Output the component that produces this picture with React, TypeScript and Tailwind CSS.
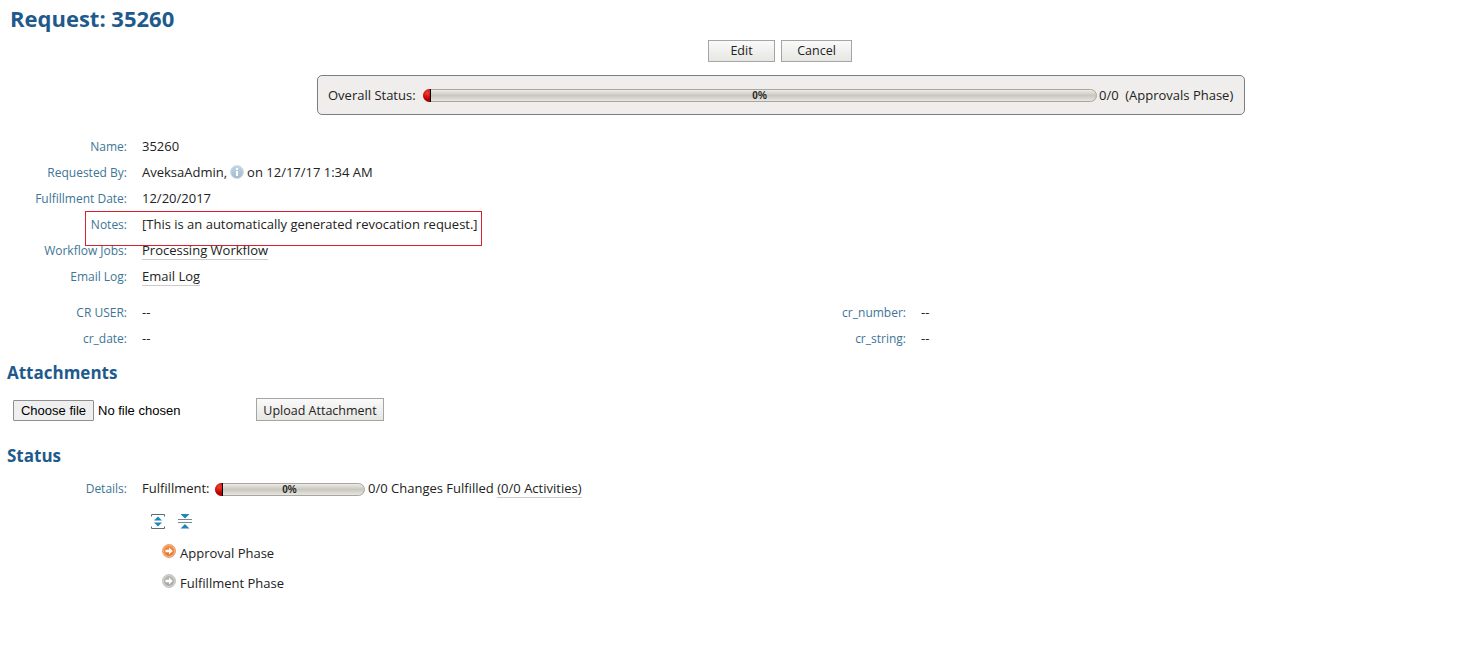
const font = "font-['Open_Sans',sans-serif]";

function Bar({ width }: { width: string }) {
  return (
    <span className={`relative inline-block h-[13px] ${width}`}>
      <span className="absolute inset-0 rounded-full border border-[#a8a69e] bg-[linear-gradient(#ecebe7,#c9c7be_50%,#e6e5e0)]" />
      <span className="absolute left-0 top-0 h-[13px] w-[8px] rounded-l-full border-r border-black bg-[radial-gradient(circle_at_60%_30%,#f04030,#c00000_60%,#900000)]" />
      <span className="absolute inset-0 flex items-center justify-center font-['Liberation_Sans',sans-serif] text-[10px] font-bold text-[#222]">
        0%
      </span>
    </span>
  );
}

function Row({ label, children }: { label: string; children: React.ReactNode }) {
  return (
    <div className="flex h-[26px] items-center">
      <div className="w-[127px] shrink-0 text-right text-[12px] text-[#3d7596]">{label}:</div>
      <div className="ml-[15px] flex items-center">{children}</div>
    </div>
  );
}

function Btn({ children, className }: { children: React.ReactNode; className: string }) {
  return (
    <button className={`border border-[#a5a5a5] bg-[linear-gradient(#fafafa,#e6e6e2)] text-[12.5px] text-[#222] ${className}`}>
      {children}
    </button>
  );
}

function PhaseIcon({ id, light, mid, dark }: { id: string; light: string; mid: string; dark: string }) {
  return (
    <svg width="14" height="14" viewBox="0 0 14 14">
      <defs>
        <linearGradient id={id} x1="0" y1="0" x2="0" y2="1">
          <stop offset="0" stopColor={mid} />
          <stop offset="1" stopColor={dark} />
        </linearGradient>
      </defs>
      <circle cx="7" cy="7" r="6.5" fill={light} stroke={dark} strokeWidth="0.6" />
      <circle cx="7" cy="7" r="5" fill={`url(#${id})`} />
      <path d="M3.5 5.8H7V3.5L10.8 7 7 10.5V8.2H3.5Z" fill="#fff" />
    </svg>
  );
}

export default function App() {
  return (
    <div className={`${font} h-[665px] bg-white text-[13px] text-[#222]`}>
      <h1 className="pl-[10px] pt-[5px] text-[22px] font-bold leading-[27px] text-[#1f5a8c]">Request: 35260</h1>

      <div className="ml-[708px] mt-[8px] flex gap-[6px]">
        <Btn className="h-[22px] w-[67px] pt-px">Edit</Btn>
        <Btn className="h-[22px] w-[71px] pt-px">Cancel</Btn>
      </div>

      <div className="ml-[317px] mt-[13px] flex h-[40px] w-[928px] items-center rounded-[5px] border border-[#7d7d7d] bg-[#efeeec] pl-[10px] pt-px">
        <span>Overall Status:</span>
        <span className="ml-[7px] flex"><Bar width="w-[674px]" /></span>
        <span className="ml-[2.5px]">0/0</span>
        <span className="ml-[6.5px]">(Approvals Phase)</span>
      </div>

      <div className="mt-[19px]">
        <Row label="Name">35260</Row>
        <Row label="Requested By">
          AveksaAdmin,
          <svg className="mx-[3px] -mt-[2px]" width="14" height="14" viewBox="0 0 14 14">
            <defs>
              <linearGradient id="info" x1="0" y1="0" x2="0" y2="1">
                <stop offset="0" stopColor="#c3d6e4" />
                <stop offset="1" stopColor="#9fb9cd" />
              </linearGradient>
            </defs>
            <circle cx="7" cy="7" r="6.5" fill="url(#info)" stroke="#d3dde5" />
            <rect x="6" y="6" width="2" height="5" fill="#fff" />
            <rect x="6" y="3" width="2" height="2" fill="#fff" />
          </svg>
          on 12/17/17 1:34 AM
        </Row>
        <Row label="Fulfillment Date">12/20/2017</Row>
        <div className="relative">
          <Row label="Notes">[This is an automatically generated revocation request.]</Row>
          <div className="pointer-events-none absolute left-[85px] top-[-1px] h-[35px] w-[397px] border border-[#d9202f]" />
        </div>
        <Row label="Workflow Jobs">
          <span className="border-b border-[#ccc] leading-[17px]">Processing Workflow</span>
        </Row>
        <Row label="Email Log">
          <span className="border-b border-[#ccc] leading-[17px]">Email Log</span>
        </Row>
      </div>

      <div className="mt-[10px] grid grid-cols-[779px_1fr]">
        <Row label="CR USER">--</Row>
        <Row label="cr_number">--</Row>
        <Row label="cr_date">--</Row>
        <Row label="cr_string">--</Row>
      </div>

      <h2 className="mt-[9px] pl-[7px] text-[17px] font-bold leading-[24px] text-[#1f5a8c]">Attachments</h2>

      <div className="ml-[13px] mt-[13px] flex items-end">
        <button className="h-[21px] w-[81px] rounded-[1px] border border-[#8f8f8f] bg-[#efefef] font-['Liberation_Sans',sans-serif] text-[13px] text-black">
          Choose file
        </button>
        <span className="ml-[4px] w-[158px] pb-[1px] font-['Liberation_Sans',sans-serif] text-[13px] text-black">No file chosen</span>
        <Btn className="h-[23px] w-[128px] pt-[3px]">Upload Attachment</Btn>
      </div>

      <h2 className="mt-[23px] pl-[7px] text-[17px] font-bold leading-[24px] text-[#1f5a8c]">Status</h2>

      <div className="mt-[8px]">
        <Row label="Details">
          Fulfillment:
          <span className="ml-[5px] flex"><Bar width="w-[150px]" /></span>
          <span className="ml-[3.5px]">0/0 Changes Fulfilled</span>
          <span className="ml-[3.5px] border-b border-[#ccc] leading-[17px]">(0/0 Activities)</span>
        </Row>
      </div>

      {/* expand / collapse all */}
      <div className="ml-[151px] mt-[12px] flex gap-[13px]">
        <svg width="14" height="15" viewBox="0 0 14 15">
          <path d="M.5 2.5V.5H13.5V2.5M.5 12.5V14.5H13.5V12.5" fill="none" stroke="#5c6a74" />
          <path d="M7 2.5L11 6.5H3Z M3 8.5H11L7 12.5Z" fill="#1f86b8" />
        </svg>
        <svg width="14" height="15" viewBox="0 0 14 15">
          <path d="M0 5.5H14M0 8.5H14" stroke="#7a8890" />
          <path d="M2.5 0H11.5L7 4.5Z M7 10L11.5 14.5H2.5Z" fill="#1f86b8" />
        </svg>
      </div>

      <div className="ml-[162px] mt-[15px] flex h-[20px] items-center">
        <span className="-mt-[6px]"><PhaseIcon id="approval" light="#f6b184" mid="#f58a3c" dark="#e8742a" /></span>
        <span className="ml-[4px]">Approval Phase</span>
      </div>
      <div className="ml-[162px] mt-[10px] flex h-[20px] items-center">
        <span className="-mt-[6px]"><PhaseIcon id="fulfillment" light="#d4d4cf" mid="#b8b8b4" dark="#a6a6a2" /></span>
        <span className="ml-[4px]">Fulfillment Phase</span>
      </div>
    </div>
  );
}
